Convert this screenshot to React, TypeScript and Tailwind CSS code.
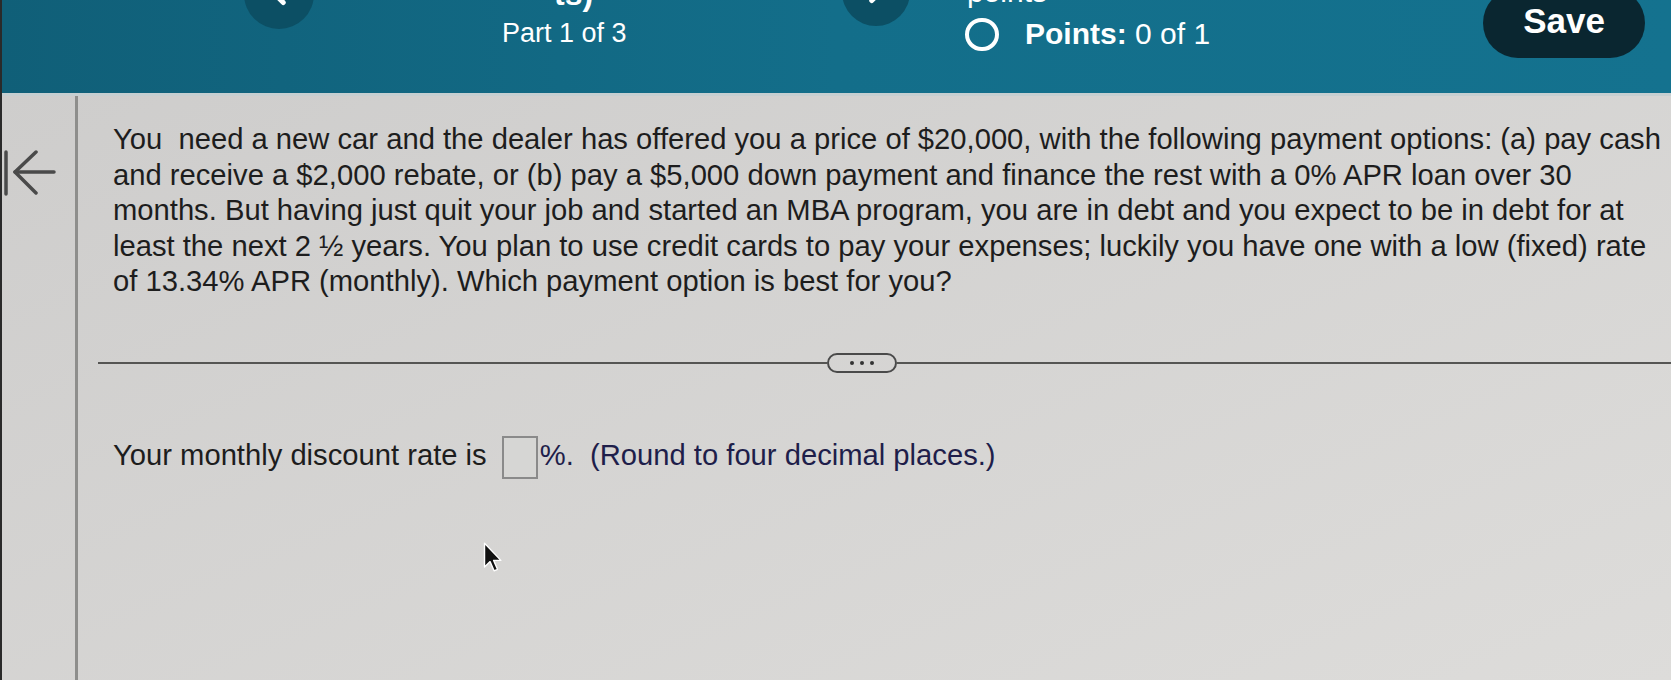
import { ChevronLeft, ChevronRight } from 'lucide-react'

const questionLines = [
  'You\u00a0 need a new car and the dealer has offered you a price of $20,000, with the following payment options: (a) pay cash',
  'and receive a $2,000 rebate, or (b) pay a $5,000 down payment and finance the rest with a 0% APR loan over 30',
  'months. But having just quit your job and started an MBA program, you are in debt and you expect to be in debt for at',
  'least the next 2 \u00bd years. You plan to use credit cards to pay your expenses; luckily you have one with a low (fixed) rate',
  'of 13.34% APR (monthly). Which payment option is best for you?',
]

function Header() {
  return (
    <div className="h-[96px] shrink-0 overflow-hidden bg-linear-to-r from-[#105f78] via-[#136e8a] to-[#14728f] border-b-[3px] border-[#c6cfd1]">
      <div className="flex items-start text-white">
        {/* previous question */}
        <button className="ml-[242px] mt-[-41px] w-[70px] h-[70px] shrink-0 rounded-full bg-[#0c4f64] flex items-center justify-center">
          <ChevronLeft className="w-[34px] h-[34px] text-white" strokeWidth={3.5} />
        </button>

        {/* question title */}
        <div className="ml-[188px] w-[300px] shrink-0 flex flex-col">
          <div className="mt-[-21px] pl-[52px] h-[30px] text-[32px] leading-[30px] font-bold">ts)</div>
          <div className="mt-[9px] text-[27px] leading-[30px]">Part 1 of 3</div>
        </div>

        {/* next question */}
        <button className="ml-[40px] mt-[-42px] w-[68px] h-[68px] shrink-0 rounded-full bg-[#0c4f64] flex items-center justify-center">
          <ChevronRight className="w-[34px] h-[34px] text-white" strokeWidth={3.5} />
        </button>

        {/* score */}
        <div className="ml-[55px] w-[300px] shrink-0 flex flex-col">
          <div className="mt-[-23px] pl-[2px] h-[30px] text-[30px] leading-[30px]">points</div>
          <div className="mt-[11px] h-[32px] flex items-center">
            <span className="w-[34px] h-[33px] rounded-full border-[4px] border-white" />
            <span className="ml-[26px] text-[30px] leading-[32px] whitespace-nowrap">
              <span className="font-bold">Points:</span> 0 of 1
            </span>
          </div>
        </div>

        <button className="ml-[218px] mt-[-12px] w-[162px] h-[70px] shrink-0 rounded-full bg-[#0a2630] flex items-center justify-center pb-[5px]">
          <span className="text-[35px] leading-none font-bold text-white">Save</span>
        </button>
      </div>
    </div>
  )
}

function BackIcon() {
  return (
    <svg width="54" height="46" viewBox="0 0 54 46" fill="none" stroke="#4a4a4a" strokeWidth="3.5" strokeLinecap="round">
      <line x1="4" y1="2" x2="4" y2="44" />
      <line x1="13" y1="22" x2="52" y2="22" />
      <polyline points="34,2 13,22 34,43" strokeLinejoin="round" />
    </svg>
  )
}

function Cursor() {
  return (
    <svg width="20" height="32" viewBox="0 0 13 20" className="absolute left-[481px] top-[541px]">
      <path d="M1 1 L1 16.5 L4.6 13 L7.2 19 L9.4 18 L6.9 12.2 L11.6 12.2 Z" fill="#111" stroke="#fff" strokeWidth="0.9" strokeLinejoin="round" />
    </svg>
  )
}

export default function App() {
  return (
    <div
      className="relative h-[680px] w-full overflow-hidden flex flex-col border-l-[2px] border-[#2a2a2a] bg-linear-to-br from-[#cdcccb] to-[#dddcda]"
      style={{ fontFamily: '"Liberation Sans", Arial, sans-serif' }}
    >
      <Header />

      <div className="flex flex-1">
        {/* left rail */}
        <div className="w-[76px] shrink-0 border-r-[3px] border-[#8e8e8c] pt-[54px]">
          <BackIcon />
        </div>

        {/* question body */}
        <div className="flex-1 flex flex-col pt-[26px]">
          <div className="pl-[35px] text-[29.2px] leading-[35.5px] text-[#1d1d1d]">
            {questionLines.map((line, i) => (
              <div key={i} className="whitespace-nowrap">{line}</div>
            ))}
          </div>

          <div className="mt-[53px] ml-[20px] flex items-center">
            <div className="w-[729px] h-[2px] bg-[#555553]" />
            <div className="w-[70px] h-[20px] shrink-0 rounded-full border-[2px] border-[#4a4a4a] flex items-center justify-center gap-[6px]">
              <span className="w-[4px] h-[4px] rounded-full bg-[#333]" />
              <span className="w-[4px] h-[4px] rounded-full bg-[#333]" />
              <span className="w-[4px] h-[4px] rounded-full bg-[#333]" />
            </div>
            <div className="flex-1 h-[2px] bg-[#555553]" />
          </div>

          <div className="mt-[63px] pl-[35px] flex items-start text-[29.2px] leading-[35px]">
            <span className="mt-[2px] text-[#1d1d1d] whitespace-nowrap">Your monthly discount rate is</span>
            <span className="ml-[15px] w-[36px] h-[43px] shrink-0 border-[2px] border-[#8a8a8a] bg-[#d6d6d4]" />
            <span className="ml-[2px] mt-[2px] text-[#1e1e4a] whitespace-nowrap">%.{'\u00a0 '}(Round to four decimal places.)</span>
          </div>
        </div>
      </div>

      <Cursor />
    </div>
  )
}
